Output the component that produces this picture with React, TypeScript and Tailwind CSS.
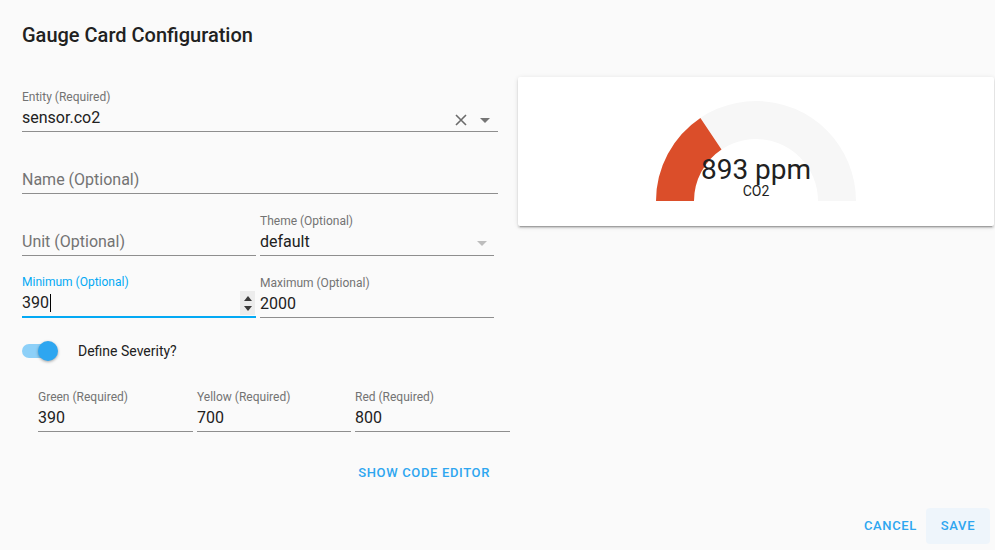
import React from "react";

function Field({
  label,
  value,
  placeholder,
  width,
  focused,
  trailing,
  cursor,
}: {
  label?: string;
  value?: string;
  placeholder?: string;
  width: string;
  focused?: boolean;
  trailing?: React.ReactNode;
  cursor?: boolean;
}) {
  return (
    <div
      className={`${width} h-[62px] flex flex-col justify-end shrink-0 ${
        focused ? "border-b-2 border-[#03a9f4]" : "border-b border-[#8e8e8e]"
      }`}
    >
      {label && (
        <div
          className={`text-[12px] leading-[16px] mb-[1px] ${
            focused ? "text-[#03a9f4]" : "text-[#737373]"
          }`}
        >
          {label}
        </div>
      )}
      <div className="h-[24px] mb-[1px] flex items-center text-[16px] leading-[24px]">
        {value ? (
          <span className="text-[#212121] flex items-center">
            {value}
            {cursor && <span className="inline-block w-px h-[18px] bg-black ml-[1px]" />}
          </span>
        ) : (
          <span className="text-[#737373]">{placeholder}</span>
        )}
        <div className="ml-auto flex items-center h-full">{trailing}</div>
      </div>
    </div>
  );
}

function Caret({ color }: { color: string }) {
  return (
    <svg width="10" height="5" viewBox="0 0 10 5">
      <path d="M0 0 L10 0 L5 5 Z" fill={color} />
    </svg>
  );
}

function Gauge() {
  return (
    <div className="relative w-[200px] h-[100px]">
      <svg width="200" height="100" viewBox="0 0 200 100">
        <path d="M0 100 A100 100 0 0 1 200 100 L162 100 A62 62 0 0 0 38 100 Z" fill="#f7f7f7" />
        <path d="M0 100 A100 100 0 0 1 44.4 16.9 L65.5 48.5 A62 62 0 0 0 38 100 Z" fill="#db4e2a" />
      </svg>
      <div className="absolute left-0 right-0 top-[55px] text-center text-[28px] leading-[28px] text-[#212121]">
        893 ppm
      </div>
      <div className="absolute left-0 right-0 top-[83px] text-center text-[14px] leading-[14px] text-[#212121]">
        CO2
      </div>
    </div>
  );
}

export default function App() {
  return (
    <div className="w-[995px] h-[550px] bg-[#fafafa] flex flex-col font-['Roboto',sans-serif] text-[#212121] overflow-hidden">
      <h2 className="pl-[22px] pt-[23px] text-[20px] font-medium leading-[24px]">
        Gauge Card Configuration
      </h2>

      <div className="flex items-start gap-[20px] pl-[22px] mt-[23px]">
        {/* form */}
        <div className="w-[476px] shrink-0">
          <Field
            label="Entity (Required)"
            value="sensor.co2"
            width="w-[476px]"
            trailing={
              <div className="flex items-center gap-[13px] pr-[8px] pt-[4px]">
                <svg width="12" height="12" viewBox="0 0 12 12">
                  <path d="M1 1 L11 11 M11 1 L1 11" stroke="#6b6b6b" strokeWidth="1.6" />
                </svg>
                <Caret color="#757575" />
              </div>
            }
          />
          <Field placeholder="Name (Optional)" width="w-[476px]" />
          <div className="flex gap-[4px]">
            <Field placeholder="Unit (Optional)" width="w-[234px]" />
            <Field
              label="Theme (Optional)"
              value="default"
              width="w-[234px]"
              trailing={
                <div className="pr-[7px] pt-[2px]">
                  <Caret color="#bdbdbd" />
                </div>
              }
            />
          </div>
          <div className="flex gap-[4px]">
            <Field
              label="Minimum (Optional)"
              value="390"
              width="w-[234px]"
              focused
              cursor
              trailing={
                <div className="w-[15px] h-[24px] bg-[#ececec] flex flex-col items-center justify-center gap-[5px] mr-[1px]">
                  <svg width="8" height="5" viewBox="0 0 8 5">
                    <path d="M0 5 L8 5 L4 0 Z" fill="#3a3a3a" />
                  </svg>
                  <svg width="8" height="5" viewBox="0 0 8 5">
                    <path d="M0 0 L8 0 L4 5 Z" fill="#3a3a3a" />
                  </svg>
                </div>
              }
            />
            <Field label="Maximum (Optional)" value="2000" width="w-[234px]" />
          </div>

          <div className="mt-[23px] h-[20px] flex items-center">
            <div className="relative w-[36px] h-[20px] flex items-center">
              <div className="w-[34px] h-[14px] rounded-full bg-[#8dd0f8]" />
              <div className="absolute right-0 top-0 w-[20px] h-[20px] rounded-full bg-[#2ea6f0] shadow-[0_1px_3px_rgba(0,0,0,0.35)]" />
            </div>
            <span className="ml-[20px] text-[14px] leading-[20px] text-[#212121]">Define Severity?</span>
          </div>

          <div className="mt-[9px] ml-[16px] flex gap-[4px]">
            <Field label="Green (Required)" value="390" width="w-[155px]" />
            <Field label="Yellow (Required)" value="700" width="w-[154px]" />
            <Field label="Red (Required)" value="800" width="w-[155px]" />
          </div>

          <div className="mt-[23px] flex justify-end">
            <button className="h-[36px] px-[8px] text-[13px] font-medium tracking-[0.05em] text-[#2ea6f0] uppercase">
              Show Code Editor
            </button>
          </div>
        </div>

        {/* preview card */}
        <div className="w-[476px] h-[149px] mt-[7px] bg-white rounded-[2px] shadow-[0_2px_2px_0_rgba(0,0,0,0.14),0_1px_5px_0_rgba(0,0,0,0.12),0_3px_1px_-2px_rgba(0,0,0,0.2)] flex justify-center pt-[24px]">
          <Gauge />
        </div>
      </div>

      <div className="mt-auto flex justify-end gap-[1px] pr-[5px] pb-[6px]">
        <button className="h-[36px] min-w-[64px] px-[8px] text-[13px] font-medium tracking-[0.05em] text-[#2ea6f0]">
          CANCEL
        </button>
        <button className="h-[36px] w-[64px] rounded-[4px] bg-[#eef5fb] text-[13px] font-medium tracking-[0.05em] text-[#2ea6f0]">
          SAVE
        </button>
      </div>
    </div>
  );
}
